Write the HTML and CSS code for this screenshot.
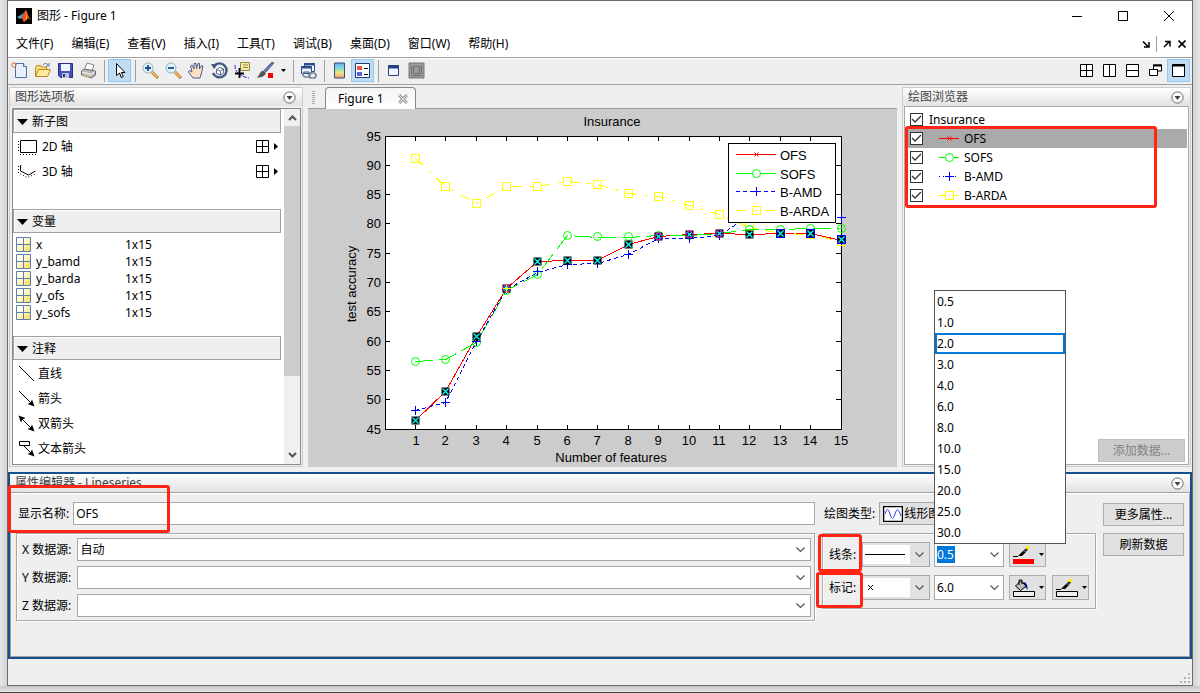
FILE: index.html
```html
<!DOCTYPE html>
<html lang="zh-CN">
<head>
<meta charset="utf-8">
<title>图形 - Figure 1</title>
<link rel="stylesheet" href="styles.css">
</head>
<body>
<svg class="defs" aria-hidden="true">
  <defs>
    <symbol id="grid4" viewBox="0 0 13 13"><path d="M0.5 0.5h12v12h-12zM6.5 0v13M0 6.5h13" fill="#fff" stroke="#000"/></symbol>
    <symbol id="menu-circle" viewBox="0 0 13 13"><circle cx="6.500" cy="6.500" r="5.600" fill="#fff" stroke="#666"/><path d="M3.500 5h6l-3 4z" fill="#444"/></symbol>
    <linearGradient id="cell" x1="0" y1="0" x2="1" y2="1"><stop offset="0.300" stop-color="#fffef0"/><stop offset="1" stop-color="#fbd94a"/></linearGradient>
    <symbol id="variable" viewBox="0 0 15 15"><path d="M.5.5h14v14H.5z" fill="url(#cell)" stroke="#5c80a8"/><path d="M7.500 0v15M0 7.500h15" stroke="#5c80a8"/></symbol>
    <symbol id="head" viewBox="0 0 9 9"><path d="M8.500 8.500L6 1.500 4.500 4.500 1.500 6z"/></symbol>
    <symbol id="m-x" viewBox="-6 -6 12 12"><path d="M-2-2L2 2M-2 2L2-2" stroke="currentColor"/></symbol>
    <symbol id="m-o" viewBox="-6 -6 12 12"><circle r="4" fill="none" stroke="currentColor"/></symbol>
    <symbol id="m-p" viewBox="-6 -6 12 12"><path d="M-4.500 0h9M0-4.500v9" stroke="currentColor"/></symbol>
    <symbol id="m-s" viewBox="-6 -6 12 12"><path d="M-4-4h8v8h-8z" fill="none" stroke="currentColor"/></symbol>
    <symbol id="m-sel" viewBox="-6 -6 12 12"><path d="M-4-4h8v8h-8z"/><path d="M-3-3L3 3M-3 3L3-3" stroke="#0ff" stroke-width="1.300"/></symbol>
    <symbol id="m-mix" viewBox="-6 -6 12 12"><path d="M-4-4h8v8h-8z"/><circle r="3.500" fill="none" stroke="#f0f"/><path d="M-2-2L2 2M-2 2L2-2" stroke="#0ff" stroke-width="1.300"/></symbol>
  </defs>
</svg>

<div class="window">
  <header class="titlebar">
    <svg class="logo" width="16" height="16" viewBox="0 0 16 16"><path d="M0 0h16v16H0z"/><path d="M1 9l4-2 3-3-2 6-2 1z" fill="#5aa0c0"/><path d="M5 10c2-1 3-7 5-8 1 0 2 7 5 10-2-1-3-2-4-1s-2 3-3 3-1-4-3-4z" fill="#e8561e"/><path d="M9.500 3c1 2 1 6 0 9l1.500-1c0-3-.5-6-1.500-8z" fill="#ffc24a"/></svg>
    <h1>图形 - Figure 1</h1>
    <div class="winbtns">
      <button aria-label="最小化"><svg width="12" height="12"><path d="M1 6.500h10" stroke="#000"/></svg></button>
      <button aria-label="最大化"><svg width="12" height="12"><path d="M1.500 1.500h9v9h-9z" fill="none" stroke="#000"/></svg></button>
      <button aria-label="关闭"><svg width="12" height="12"><path d="M1 1l10 10M11 1L1 11" stroke="#000"/></svg></button>
    </div>
  </header>

  <nav class="menubar">
    <a href="#">文件(F)</a><a href="#">编辑(E)</a><a href="#">查看(V)</a><a href="#">插入(I)</a><a href="#">工具(T)</a><a href="#">调试(B)</a><a href="#">桌面(D)</a><a href="#">窗口(W)</a><a href="#">帮助(H)</a>
    <div class="dockbtns">
      <button aria-label="停靠"><svg width="8" height="8"><path d="M1 1.500l5 5M7 2v5H2" fill="none" stroke="#000" stroke-width="1.500"/></svg></button>
      <i class="sep"></i>
      <button aria-label="取消停靠"><svg width="8" height="8"><path d="M1 7l5-5M2 1.500h5v5" fill="none" stroke="#000" stroke-width="1.500"/></svg></button>
      <button aria-label="关闭图形"><svg width="8" height="8"><path d="M.5.500l7 7M7.500.500l-7 7" stroke="#000" stroke-width="1.600"/></svg></button>
    </div>
  </nav>

  <div class="toolbar">
    <button aria-label="新建"><svg width="17" height="17"><path d="M4.500 1.500h8l3 3v11h-11z" fill="#e6f1fb" stroke="#4f6f9f"/><path d="M12.500 1.500v3h3" fill="#fff" stroke="#4f6f9f"/><path d="M3 0v6M0 3h6M1 1l4 4M5 1L1 5" stroke="#d8632a"/><circle cx="3" cy="3" r="1.200" fill="#fff"/></svg></button>
    <button aria-label="打开"><svg width="17" height="17"><path d="M1.500 14.500v-9l1-2h4l1 1.500h5v3" fill="#f8dc80" stroke="#b98a1f"/><path d="M1.500 14.500l3-7h12l-3 7z" fill="#fdea9c" stroke="#b98a1f"/><path d="M9 3c1-2 4-2 5 0M15 1v3h-3" fill="none" stroke="#4c76a8"/></svg></button>
    <button aria-label="保存"><svg width="17" height="17"><path d="M1.500 1.500h14v14h-12l-2-2z" fill="#4254b4" stroke="#26307c"/><path d="M4 2h9v7H4z" fill="#eef3ff"/><path d="M5 11h7v5H5z" fill="#b9c4df"/><path d="M6 12h2v3H6z" fill="#26307c"/></svg></button>
    <button aria-label="打印"><svg width="17" height="17"><path d="M4 8l3-7 7 2-2 6z" fill="#fff" stroke="#888"/><path d="M1.500 9l3-2 11 2v4l-4 3-10-3z" fill="#b9b9bb" stroke="#666"/><path d="M2 10l9 2.500 4-3" fill="none" stroke="#fff"/><path d="M3 13l7 2" stroke="#dcc14e"/></svg></button>
    <i class="sep"></i>
    <button class="on" aria-label="选择"><svg width="17" height="17"><path d="M5.500 1.500v12l3-2.500 1.800 4.500 2-.8-2-4.200h3.700z" fill="#fff" stroke="#000"/></svg></button>
    <i class="sep"></i>
    <button aria-label="放大"><svg width="17" height="17"><path d="M10 10l6 6" stroke="#9a6a20" stroke-width="3"/><path d="M10 10l5.500 5.500" stroke="#f3b356" stroke-width="1.800"/><circle cx="6" cy="6" r="5" fill="#dff2fa" stroke="#8fb2cc"/><path d="M3 6h6M6 3v6" stroke="#1c4b86" stroke-width="1.800"/></svg></button>
    <button aria-label="缩小"><svg width="17" height="17"><path d="M10 10l6 6" stroke="#9a6a20" stroke-width="3"/><path d="M10 10l5.500 5.500" stroke="#f3b356" stroke-width="1.800"/><circle cx="6" cy="6" r="5" fill="#dff2fa" stroke="#8fb2cc"/><path d="M3 6h6" stroke="#1c4b86" stroke-width="1.800"/></svg></button>
    <button aria-label="平移"><svg width="17" height="17"><path d="M5 16l-4.500-6 1-1.500L4 10 2.500 4 4 3l2 4V1.500h2l.5 5 1.500-5h1.500V7l2-3.500 1.500.500-1.500 7L12 16z" fill="#fbe0c6" stroke="#4d5a94"/></svg></button>
    <button aria-label="旋转"><svg width="17" height="17"><path d="M3 4a7 7 0 1 1-1 7" fill="none" stroke="#40597f" stroke-width="2.400"/><path d="M0 2h7L3 7z" fill="#40597f"/><path d="M5.500 7.500l3-2 4 1.500v4l-3 2-4-1.500zM5.500 7.500l4 1.500v4M9.500 9l3-2" fill="#fff" stroke="#56698a"/></svg></button>
    <button aria-label="数据游标"><svg width="17" height="17"><path d="M6.500.500h9v8h-9z" fill="#f5ecab" stroke="#968a3c"/><path d="M9 3h5M9 5.500h5" stroke="#968a3c"/><path d="M1 3c0 7 4 11 14 13" fill="none" stroke="#2a35e0" stroke-dasharray="4 1"/><path d="M5.500 6v10M1 11.500h9" stroke="#000" stroke-width="1.800"/></svg></button>
    <button aria-label="刷亮"><svg width="19" height="17"><path d="M16 0l2 1-8 9-2-1.500z" fill="#6678b4" stroke="#3c487a" stroke-width=".7"/><path d="M7 8.500l3 2.500c-2 4-5 5-9.500 4.500C4 14 3 10 7 8.500z" fill="#555"/><path d="M12 11h5v5h-5z" fill="#f00"/></svg></button>
    <button class="narrow" aria-label="刷亮选项"><svg width="5" height="3"><path d="M0 0h5L2.500 3z"/></svg></button>
    <i class="sep"></i>
    <button aria-label="链接"><svg width="17" height="17"><path d="M4.500 1.500h10v8h-10z" fill="#fff" stroke="#294b8d"/><path d="M4 2.500h11" stroke="#294b8d" stroke-width="2"/><path d="M1.500 4.500h10v7h-10z" fill="#e9f1fc" stroke="#294b8d"/><path d="M1 5.500h11" stroke="#294b8d" stroke-width="2"/><rect x="3" y="10" width="7" height="5" rx="2.500" fill="none" stroke="#71869c" stroke-width="1.700"/><rect x="9" y="11" width="7" height="5" rx="2.500" fill="none" stroke="#71869c" stroke-width="1.700"/></svg></button>
    <i class="sep"></i>
    <button aria-label="颜色栏"><svg width="17" height="17"><defs><linearGradient id="cb" x1="0" y1="0" x2="0" y2="1"><stop offset="0" stop-color="#6fa8f4"/><stop offset=".35" stop-color="#7ce0d4"/><stop offset=".65" stop-color="#f3e47e"/><stop offset="1" stop-color="#f09a7a"/></linearGradient></defs><path d="M3.500 1h10v15h-10z" fill="url(#cb)" stroke="#324d86"/></svg></button>
    <button class="on" aria-label="图例"><svg width="17" height="17"><path d="M1.500 1.500h14v14h-14z" fill="#fff" stroke="#1c3a78"/><path d="M3 4h5v4H3z" fill="#e8544a"/><path d="M3 10h5v4H3z" fill="#5a5fe0"/><path d="M10 6.500h4M10 12.500h4" stroke="#000"/></svg></button>
    <i class="sep"></i>
    <button aria-label="隐藏绘图工具"><svg width="17" height="17"><path d="M3.500 3.500h10v10h-10z" fill="#eef5ff" stroke="#23427f"/><path d="M3 5h11" stroke="#23427f" stroke-width="3"/></svg></button>
    <button aria-label="显示绘图工具"><svg width="17" height="17"><path d="M1 1h15v15H1z" fill="#999" stroke="#777"/><path d="M3.500 4v8M13.500 4v8M5.500 4.500h6v7h-6zM4 13.500h9" fill="none" stroke="#6f6f6f"/></svg></button>
    <div class="layouts">
      <button aria-label="平铺"><svg width="13" height="13"><use href="#grid4"/></svg></button>
      <button aria-label="左右平铺"><svg width="13" height="13"><path d="M.5.500h12v12H.5zM6.500 0v13" fill="#fff" stroke="#000"/></svg></button>
      <button aria-label="上下平铺"><svg width="13" height="13"><path d="M.5.500h12v12H.5zM0 6.500h13" fill="#fff" stroke="#000"/></svg></button>
      <button aria-label="浮动"><svg width="13" height="13"><path d="M4.500 1h8v6h-8z" fill="#fff" stroke="#000"/><path d="M4 1.500h9M0 6h9" stroke="#000" stroke-width="2"/><path d="M.5 5.500h8v6h-8z" fill="#fff" stroke="#000"/></svg></button>
      <button class="on" aria-label="最大化布局"><svg width="13" height="13"><path d="M.5.500h12v12H.5z" fill="#fff" stroke="#000"/><path d="M0 1.500h13" stroke="#000" stroke-width="2"/></svg></button>
    </div>
  </div>

  <main class="workspace">
    <section class="panel palette">
      <header class="panel-head"><h2>图形选项板</h2><button aria-label="面板菜单"><svg width="13" height="13"><use href="#menu-circle"/></svg></button></header>
      <div class="palette-box">
        <div class="palette-list">
          <h3 class="group"><svg width="11" height="6"><path d="M0 0h11L5.500 6z"/></svg>新子图</h3>
          <ul class="items axes">
            <li><svg width="20" height="16"><path d="M2.500 1.500h16v12h-16z" fill="none" stroke="#000"/><path d="M.5 2v12M2 15.500h17" stroke="#000" stroke-dasharray="1 2"/></svg><span>2D 轴</span><svg width="13" height="13"><use href="#grid4"/></svg><svg width="4" height="7"><path d="M0 0v7l4-3.500z"/></svg></li>
            <li><svg width="20" height="16"><path d="M2.500 1v6l8 4 7-4" fill="none" stroke="#000"/><path d="M.5 2v7l9 4.500 9-4" fill="none" stroke="#000" stroke-dasharray="1 2"/></svg><span>3D 轴</span><svg width="13" height="13"><use href="#grid4"/></svg><svg width="4" height="7"><path d="M0 0v7l4-3.500z"/></svg></li>
          </ul>
          <h3 class="group"><svg width="11" height="6"><path d="M0 0h11L5.500 6z"/></svg>变量</h3>
          <table class="vars">
            <tr><td><svg width="15" height="15"><use href="#variable"/></svg></td><td>x</td><td>1x15</td></tr>
            <tr><td><svg width="15" height="15"><use href="#variable"/></svg></td><td>y_bamd</td><td>1x15</td></tr>
            <tr><td><svg width="15" height="15"><use href="#variable"/></svg></td><td>y_barda</td><td>1x15</td></tr>
            <tr><td><svg width="15" height="15"><use href="#variable"/></svg></td><td>y_ofs</td><td>1x15</td></tr>
            <tr><td><svg width="15" height="15"><use href="#variable"/></svg></td><td>y_sofs</td><td>1x15</td></tr>
          </table>
          <h3 class="group"><svg width="11" height="6"><path d="M0 0h11L5.500 6z"/></svg>注释</h3>
          <ul class="items notes">
            <li><svg width="17" height="17"><path d="M1 1l15 15" stroke="#000"/></svg><span>直线</span></li>
            <li><svg width="17" height="17"><path d="M1 1l12 12" stroke="#000"/><use href="#head" x="8" y="8" width="9" height="9"/></svg><span>箭头</span></li>
            <li><svg width="17" height="17"><path d="M3 3l10 10" stroke="#000"/><use href="#head" x="8" y="8" width="9" height="9"/><use href="#head" x="8" y="8" width="9" height="9" transform="rotate(180 8.500 8.500)"/></svg><span>双箭头</span></li>
            <li><svg width="17" height="17"><path d="M1.500 1.500h10v4h-10z" fill="none" stroke="#000"/><path d="M6 6l8 8" stroke="#000"/><use href="#head" x="8" y="8" width="9" height="9"/></svg><span>文本箭头</span></li>
          </ul>
        </div>
        <div class="scrollbar">
          <svg width="9" height="6"><path d="M1 5l3.500-3.500L8 5" fill="none" stroke="#555" stroke-width="2"/></svg>
          <div class="thumb"></div>
          <svg width="9" height="6"><path d="M1 1l3.500 3.500L8 1" fill="none" stroke="#555" stroke-width="2"/></svg>
        </div>
      </div>
    </section>

    <section class="figure">
      <div class="tabs">
        <i class="grip"></i>
        <div class="tab"><a href="#">Figure 1</a><button aria-label="关闭标签"><svg width="10" height="10"><path d="M1 1l8 8M9 1L1 9" stroke="#999" stroke-width="3"/><path d="M1 1l8 8M9 1L1 9" stroke="#eee"/></svg></button></div>
      </div>
      <div class="canvas">
        <svg class="chart" viewBox="308 109 589 358" role="img" aria-label="Insurance">
          <path d="M385.500 136.500h456v293h-456z" fill="#fff" stroke="#000"/>
          <path stroke="#000" d="M415.500 136v5M445.500 136v5M476.500 136v5M506.500 136v5M537.500 136v5M567.500 136v5M597.500 136v5M628.500 136v5M658.500 136v5M689.500 136v5M719.500 136v5M749.500 136v5M780.500 136v5M810.500 136v5M415.500 425v5M445.500 425v5M476.500 425v5M506.500 425v5M537.500 425v5M567.500 425v5M597.500 425v5M628.500 425v5M658.500 425v5M689.500 425v5M719.500 425v5M749.500 425v5M780.500 425v5M810.500 425v5"/>
          <path stroke="#000" d="M385 165.500h5M385 194.500h5M385 223.500h5M385 253.500h5M385 282.500h5M385 311.500h5M385 341.500h5M385 370.500h5M385 399.500h5M836 165.500h5M836 194.500h5M836 223.500h5M836 253.500h5M836 282.500h5M836 311.500h5M836 341.500h5M836 370.500h5M836 399.500h5"/>
          <g class="lbl mid">
            <text x="612" y="126">Insurance</text><text x="611" y="462">Number of features</text>
            <text transform="translate(356 284) rotate(-90)">test accuracy</text>
            <text x="416" y="445">1</text><text x="445" y="445">2</text><text x="476" y="445">3</text><text x="506" y="445">4</text><text x="537" y="445">5</text><text x="567" y="445">6</text><text x="597" y="445">7</text><text x="628" y="445">8</text><text x="658" y="445">9</text><text x="689" y="445">10</text><text x="719" y="445">11</text><text x="749" y="445">12</text><text x="780" y="445">13</text><text x="810" y="445">14</text><text x="841" y="445">15</text>
          </g>
          <g class="lbl end">
            <text x="381" y="141">95</text><text x="381" y="170">90</text><text x="381" y="199">85</text><text x="381" y="228">80</text><text x="381" y="258">75</text><text x="381" y="287">70</text><text x="381" y="316">65</text><text x="381" y="346">60</text><text x="381" y="375">55</text><text x="381" y="404">50</text><text x="381" y="434">45</text>
          </g>
          <g class="series" transform="translate(.5 .5)">
            <polyline class="ofs" points="415,420 445,391 476,336 506,288 537,261 567,260 597,260 628,244 658,236 689,234 719,233 749,234 780,233 810,233 841,240"/>
            <polyline class="sofs" points="415,361 445,359 476,342 506,290 537,274 567,235 597,237 628,237 658,235 689,235 719,233 749,229 780,229 810,228 841,228"/>
            <polyline class="amd" points="415,410 445,402 476,341 506,289 537,272 567,264 597,263 628,254 658,238 689,238 719,235 749,215"/>
            <polyline class="arda" points="415,158 445,186 476,203 506,186 537,186 567,181 597,184 628,193 658,196 689,205 719,214 749,227 780,233 810,234 841,241"/>
          </g>
          <g class="c-y">
            <use href="#m-s" x="409.500" y="152.500" width="12" height="12"/><use href="#m-s" x="439.500" y="180.500" width="12" height="12"/><use href="#m-s" x="470.500" y="197.500" width="12" height="12"/><use href="#m-s" x="500.500" y="180.500" width="12" height="12"/><use href="#m-s" x="531.500" y="180.500" width="12" height="12"/><use href="#m-s" x="561.500" y="175.500" width="12" height="12"/><use href="#m-s" x="591.500" y="178.500" width="12" height="12"/><use href="#m-s" x="622.500" y="187.500" width="12" height="12"/><use href="#m-s" x="652.500" y="190.500" width="12" height="12"/><use href="#m-s" x="683.500" y="199.500" width="12" height="12"/><use href="#m-s" x="713.500" y="208.500" width="12" height="12"/><use href="#m-s" x="743.500" y="220.500" width="12" height="12"/><use href="#m-s" x="774.500" y="227.500" width="12" height="12"/><use href="#m-s" x="804.500" y="228.500" width="12" height="12"/><use href="#m-s" x="835.500" y="235.500" width="12" height="12"/>
          </g>
          <g class="c-g">
            <use href="#m-o" x="409.500" y="355.500" width="12" height="12"/><use href="#m-o" x="439.500" y="353.500" width="12" height="12"/><use href="#m-o" x="470.500" y="336.500" width="12" height="12"/><use href="#m-o" x="500.500" y="284.500" width="12" height="12"/><use href="#m-o" x="531.500" y="268.500" width="12" height="12"/><use href="#m-o" x="561.500" y="229.500" width="12" height="12"/><use href="#m-o" x="591.500" y="230.500" width="12" height="12"/><use href="#m-o" x="622.500" y="230.500" width="12" height="12"/><use href="#m-o" x="652.500" y="229.500" width="12" height="12"/><use href="#m-o" x="683.500" y="229.500" width="12" height="12"/><use href="#m-o" x="713.500" y="227.500" width="12" height="12"/><use href="#m-o" x="743.500" y="223.500" width="12" height="12"/><use href="#m-o" x="774.500" y="223.500" width="12" height="12"/><use href="#m-o" x="804.500" y="222.500" width="12" height="12"/><use href="#m-o" x="835.500" y="222.500" width="12" height="12"/>
          </g>
          <g class="c-b">
            <use href="#m-p" x="409.500" y="404.500" width="12" height="12"/><use href="#m-p" x="439.500" y="396.500" width="12" height="12"/><use href="#m-p" x="470.500" y="335.500" width="12" height="12"/><use href="#m-p" x="500.500" y="283.500" width="12" height="12"/><use href="#m-p" x="531.500" y="265.500" width="12" height="12"/><use href="#m-p" x="561.500" y="258.500" width="12" height="12"/><use href="#m-p" x="591.500" y="257.500" width="12" height="12"/><use href="#m-p" x="622.500" y="248.500" width="12" height="12"/><use href="#m-p" x="652.500" y="232.500" width="12" height="12"/><use href="#m-p" x="683.500" y="232.500" width="12" height="12"/><use href="#m-p" x="713.500" y="229.500" width="12" height="12"/><use href="#m-p" x="835.500" y="211.500" width="12" height="12"/>
          </g>
          <use href="#m-sel" x="409.500" y="414.500" width="12" height="12"/><use href="#m-sel" x="439.500" y="385.500" width="12" height="12"/><use href="#m-sel" x="470.500" y="330.500" width="12" height="12"/><use href="#m-mix" x="500.500" y="282.500" width="12" height="12"/><use href="#m-sel" x="531.500" y="255.500" width="12" height="12"/><use href="#m-sel" x="561.500" y="254.500" width="12" height="12"/><use href="#m-sel" x="591.500" y="254.500" width="12" height="12"/><use href="#m-sel" x="622.500" y="238.500" width="12" height="12"/><use href="#m-mix" x="652.500" y="230.500" width="12" height="12"/><use href="#m-mix" x="683.500" y="228.500" width="12" height="12"/><use href="#m-mix" x="713.500" y="227.500" width="12" height="12"/><use href="#m-sel" x="743.500" y="228.500" width="12" height="12"/><use href="#m-sel" x="774.500" y="227.500" width="12" height="12"/><use href="#m-sel" x="804.500" y="227.500" width="12" height="12"/><use href="#m-sel" x="835.500" y="233.500" width="12" height="12"/>
          <path d="M502.500 288.500h8M506.500 284.500v8" stroke="#ff0"/>
          <path d="M776.500 229.500h8v8h-8zM806.500 229.500h8v8h-8zM837.500 235.500h8v8h-8z" fill="none" stroke="#00f"/>
          <path d="M728.500 143.500h107v79h-107z" fill="#fff" stroke="#000"/>
          <g class="series"><path class="ofs" d="M736 154.500h40"/><path class="sofs" d="M736 173.500h40"/><path class="amd" d="M736 191.500h40"/><path class="arda" d="M736 210.500h40"/></g>
          <use class="c-r" href="#m-x" x="750.500" y="148.500" width="12" height="12"/><g class="c-g"><circle cx="756.500" cy="173.500" r="4" fill="#fff" stroke="currentColor"/></g><use class="c-b" href="#m-p" x="750.500" y="185.500" width="12" height="12"/><use class="c-y" href="#m-s" x="750.500" y="204.500" width="12" height="12"/>
          <g class="lbl"><text x="780" y="160">OFS</text><text x="780" y="179">SOFS</text><text x="780" y="197">B-AMD</text><text x="780" y="216">B-ARDA</text></g>
        </svg>
      </div>
    </section>

    <section class="panel browser">
      <header class="panel-head"><h2>绘图浏览器</h2><button aria-label="面板菜单"><svg width="13" height="13"><use href="#menu-circle"/></svg></button></header>
      <div class="browser-box">
        <div class="tree">
          <label><input type="checkbox" checked>Insurance</label>
          <label class="leaf selected"><input type="checkbox" checked><svg width="20" height="12"><path d="M0 5.500h20" stroke="red"/><use class="c-r" href="#m-x" x="4.500" y="-.5" width="12" height="12"/></svg>OFS</label>
          <label class="leaf"><input type="checkbox" checked><svg width="20" height="12"><path d="M0 5.500h6M15 5.500h5" stroke="#0f0"/><use class="c-g" href="#m-o" x="4.500" y="-.5" width="12" height="12"/></svg>SOFS</label>
          <label class="leaf"><input type="checkbox" checked><svg width="20" height="12"><path d="M0 5.500h20" stroke="#00f" stroke-dasharray="1 3"/><path d="M6 5.500h9M10.500 1v9" stroke="#00f"/></svg>B-AMD</label>
          <label class="leaf"><input type="checkbox" checked><svg width="20" height="12"><path d="M0 5.500h6M15 5.500h5M10 5.500h1" stroke="#ff0"/><use class="c-y" href="#m-s" x="4.500" y="-.5" width="12" height="12"/></svg>B-ARDA</label>
          <i class="callout callout-series"></i>
        </div>
        <button class="btn add" disabled>添加数据...</button>
      </div>
    </section>
  </main>

  <section class="editor">
    <header class="panel-head"><h2>属性编辑器 - Lineseries</h2><button aria-label="面板菜单"><svg width="13" height="13"><use href="#menu-circle"/></svg></button></header>
    <div class="editor-body">
      <div class="sources">
        <div class="name-row"><label for="dname">显示名称:</label><input id="dname" type="text" value="OFS"><i class="callout callout-name"></i></div>
        <div class="box source-grid">
          <label for="sx">X 数据源:</label><select id="sx"><option>自动</option></select>
          <label for="sy">Y 数据源:</label><select id="sy"><option></option></select>
          <label for="sz">Z 数据源:</label><select id="sz"><option></option></select>
        </div>
      </div>
      <div class="styling">
        <div class="type-row"><label for="ptype">绘图类型:</label><div class="picture-select type"><select id="ptype"><option>线形图</option></select><svg width="20" height="16"><path d="M.5.500h19v15H.5z" fill="#fff" stroke="#000" stroke-width="1.500"/><path d="M2 8c2-6 3-6 5 0s3 6 5 0 3-6 6 2" fill="none" stroke="#33f"/></svg></div></div>
        <div class="box style-box">
          <div class="style-row">
            <label for="lstyle">线条:<i class="callout callout-line"></i></label>
            <div class="picture-select"><select id="lstyle" class="gray"><option></option></select><svg width="47" height="19"><path d="M0 0h47v19H0z" fill="#fff"/><path d="M2 9.500h40" stroke="#000"/></svg></div>
            <div class="combo"><input class="marked" type="text" value="0.5" aria-label="线宽"><button aria-label="展开线宽"></button>
              <ul class="options" role="listbox"><li>0.5</li><li>1.0</li><li class="current">2.0</li><li>3.0</li><li>4.0</li><li>6.0</li><li>8.0</li><li>10.0</li><li>15.0</li><li>20.0</li><li>25.0</li><li>30.0</li></ul>
            </div>
            <button class="swatch" aria-label="线条颜色"><svg width="22" height="18"><path d="M0 10.500h5" stroke="#000"/><path d="M5 10l5-5 3 1-4 4z"/><path d="M10 5l4-4 2 1-3 4z" fill="#333"/><path d="M13 0h3v3h-3z" fill="#fe0"/><path d="M0 13h21v5H0z" fill="red"/></svg><svg width="5" height="3"><path d="M0 0h5L2.500 3z"/></svg></button>
          </div>
          <div class="style-row">
            <label for="mstyle">标记:<i class="callout callout-marker"></i></label>
            <div class="picture-select"><select id="mstyle" class="gray"><option></option></select><svg width="47" height="19"><path d="M0 0h47v19H0z" fill="#fff"/><path d="M5 7l5 5M10 7l-5 5" stroke="#000"/></svg></div>
            <div class="combo"><input type="text" value="6.0" aria-label="标记大小"><button aria-label="展开标记大小"></button></div>
            <button class="swatch" aria-label="标记填充颜色"><svg width="22" height="18"><path d="M2.500 7l5-5 6 5-6 4.500z" fill="#bbb" stroke="#000"/><path d="M6 6V1h3v4" fill="none" stroke="#000"/><path d="M10 3c3 0 5 3 4.500 8L12 7z" fill="#00117a"/><path d="M.5 12.500h21v5H.5z" fill="#eee" stroke="#000"/></svg><svg width="5" height="3"><path d="M0 0h5L2.500 3z"/></svg></button>
            <button class="swatch" aria-label="标记边颜色"><svg width="22" height="18"><path d="M0 10.500h5" stroke="#000"/><path d="M5 10l5-5 3 1-4 4z"/><path d="M10 5l4-4 2 1-3 4z" fill="#333"/><path d="M13 0h3v3h-3z" fill="#fe0"/><path d="M.5 12.500h21v5H.5z" fill="#eee" stroke="#000"/></svg><svg width="5" height="3"><path d="M0 0h5L2.500 3z"/></svg></button>
          </div>
        </div>
      </div>
      <div class="actions"><button class="btn">更多属性...</button><button class="btn">刷新数据</button></div>
    </div>
  </section>
  <footer class="status"><svg width="11" height="11"><path d="M8 0h2v2H8zM4 4h2v2H4zM8 4h2v2H8zM0 8h2v2H0zM4 8h2v2H4zM8 8h2v2H8z" fill="#b8b5a4"/></svg></footer>
</div>
<div class="taskedge"></div>
</body>
</html>
```
FILE: styles.css
```css
* { box-sizing: border-box; }
body {
  margin: 0;
  min-height: 100vh;
  padding: 0 7px;
  display: flex;
  flex-direction: column;
  background: linear-gradient(90deg, #e6e7e9, #d2d3d5 7px, #d2d3d5 calc(100% - 7px), #e8e8e8);
  font: 12px/16px "Noto Sans", "Noto Sans CJK SC", sans-serif;
  color: #000;
}
h1, h2, h3, ul { margin: 0; padding: 0; font: inherit; list-style: none; }
button, input, select { font: inherit; color: inherit; margin: 0; }
button { padding: 0; border: 0; background: none; display: grid; place-items: center; }
a { color: inherit; text-decoration: none; }
svg { display: block; flex: none; }
.defs { position: absolute; width: 0; height: 0; }

.window { flex: 1; display: flex; flex-direction: column; border: 1px solid #6c6c6c; background: #efefef; }
.taskedge { height: 7px; margin: 0 -7px; border-bottom: 1px solid #444; background: linear-gradient(#c4c5c7, #e4e4e4); }

.titlebar { display: flex; align-items: center; height: 29px; padding-left: 8px; background: #fff; }
.titlebar h1 { margin-left: 5px; }
.winbtns { display: flex; margin-left: auto; }
.winbtns button { width: 46px; height: 28px; }

.menubar { display: flex; align-items: center; gap: 18px; height: 28px; padding: 0 5px 0 8px; background: #fff; border-bottom: 1px solid #a0a0a0; }
.dockbtns { display: flex; align-items: center; gap: 5px; margin-left: auto; }
.dockbtns button { width: 10px; height: 16px; }
.sep { width: 8px; height: 22px; display: flex; justify-content: center; }
.sep::before { content: ""; width: 1px; background: #a0a0a0; }
.dockbtns .sep { width: 1px; height: 16px; }

.toolbar { display: flex; align-items: center; height: 27px; padding: 0 2px 2px 0; border-top: 1px solid #fff; border-bottom: 1px solid #a0a0a0; }
.toolbar button { width: 23px; height: 23px; }
.toolbar .narrow { width: 12px; }
.toolbar .on { background: #c0dcf3; border: 1px solid #90c8f6; }
.layouts { display: flex; margin-left: auto; }

.workspace { flex: 1; display: flex; padding: 2px 1px 5px; }
.panel { display: flex; flex-direction: column; border: 1px solid #ccc; }
.panel-head { display: flex; align-items: center; justify-content: space-between; height: 18px; padding: 0 6px 0 5px; background: linear-gradient(#fff, #e2e2e2); color: #444; }
.palette { width: 294px; }
.browser { width: 289px; }

.palette-box { flex: 1; display: flex; margin: 2px 1px 1px 2px; border: 1px solid #888b92; background: #fff; }
.palette-list { flex: 1; min-width: 0; }
.group { display: flex; align-items: center; gap: 4px; height: 24px; margin-right: 3px; padding: 1px 0 0 3px; border: 1px solid #a0a0a0; background: #efefef; box-shadow: inset 1px 1px #fff; }
.items li { display: flex; align-items: center; height: 25px; padding-left: 5px; gap: 4px; }
.items span { margin-right: auto; }
.axes { padding: 1px 6px 25px 0; }
.axes li > :last-child { margin-left: 1px; }
.notes li { gap: 3px; }
.notes { padding-top: 1px; }
.vars { border-collapse: collapse; margin: 3px 0 15px 3px; }
.vars td { padding: 0; height: 17px; line-height: 17px; }
.vars td:nth-child(1) { width: 20px; }
.vars td:nth-child(2) { width: 89px; }
.scrollbar { width: 16px; display: flex; flex-direction: column; align-items: center; padding: 6px 0; gap: 5px; background: #f0f0f0; }
.thumb { width: 100%; height: 250px; background: #cdcdcd; }
.scrollbar > :last-child { margin-top: auto; }

.figure { flex: 1; min-width: 0; display: flex; flex-direction: column; margin: 0 5px; }
.tabs { display: flex; align-items: stretch; gap: 10px; height: 22px; padding-left: 4px; border-bottom: 1px solid #999; }
.grip { width: 3px; margin: 4px 0 3px; background: repeating-linear-gradient(#aaa 0 1px, #efefef 1px 2px); }
.tab { display: flex; align-items: center; justify-content: space-between; width: 91px; margin-bottom: -1px; padding: 0 7px 0 12px; border: 1px solid #888; border-bottom: 0; border-radius: 4px 4px 0 0; background: linear-gradient(#f4f4f4, #fff); }
.canvas { flex: 1; background: #ccc; }
.chart { width: 100%; height: auto; }
.chart path, .chart polyline { shape-rendering: crispEdges; }
.lbl { font: 13px "Liberation Sans", Arial, sans-serif; }
.mid { text-anchor: middle; }
.end { text-anchor: end; }
.series { fill: none; }
.ofs { stroke: #f00; }
.sofs { stroke: #0f0; stroke-dasharray: 18 6; }
.amd { stroke: #00f; stroke-dasharray: 4 3; }
.arda { stroke: #ff0; stroke-dasharray: 10 8 3 8; }
.c-r { color: #f00; }
.c-g { color: #0f0; }
.c-b { color: #00f; }
.c-y { color: #ff0; }

.browser-box { flex: 1; display: flex; flex-direction: column; justify-content: space-between; margin: 0 1px 1px; border: 1px solid #a8a8a8; background: #fff; }
.tree { position: relative; padding: 3px 1px 0 0; }
.tree label { display: flex; align-items: center; height: 19px; padding-left: 5px; gap: 6px; }
.tree .leaf { gap: 5px; }
.tree .leaf svg { margin-left: 11px; }
.tree .selected { background: #aaa; }
.tree input {
  appearance: none;
  width: 13px;
  height: 13px;
  border: 1px solid #333;
  background: #fff url("data:image/svg+xml,%3Csvg xmlns='http://www.w3.org/2000/svg' width='11' height='11'%3E%3Cpath d='M1 5l3 3 6-6' fill='none' stroke='%23333' stroke-width='1.3'/%3E%3C/svg%3E");
}
.btn { height: 23px; border: 1px solid #adadad; background: #e1e1e1; }
.add { align-self: flex-end; width: 87px; margin: 0 3px 2px; background: #ccc; border-color: #bfbfbf; color: #838383; }

.callout { position: absolute; z-index: 2; border: 3px solid #ff2414; border-radius: 3px; pointer-events: none; }
.callout-series { left: 0; top: 19px; width: 252px; height: 82px; }
.callout-name { left: -8px; top: -17px; width: 162px; height: 48px; }
.callout-line { left: -11px; top: -13px; width: 44px; height: 38px; }
.callout-marker { left: -13px; top: -8px; width: 47px; height: 36px; }

.editor { border: 2px solid #14508c; }
.editor .panel-head { border-bottom: 1px solid #a0a0a0; padding-right: 6px; height: 19px; }
.editor-body { display: flex; gap: 7px; min-height: 164px; padding: 8px 5px 0; border: 1px solid #a0a0a0; border-top: 1px solid #fff; }
.sources { flex: 1; min-width: 0; }
.name-row { position: relative; display: flex; align-items: center; gap: 4px; padding-left: 2px; }
.name-row input { flex: 1; }
input[type="text"], select { min-width: 0; height: 23px; border: 1px solid #a5a7ac; background: #fff; border-radius: 0; padding: 0 2px; outline: 0; }
select {
  appearance: none;
  background: #fff url("data:image/svg+xml,%3Csvg xmlns='http://www.w3.org/2000/svg' width='9' height='6'%3E%3Cpath d='M.5.500l4 4 4-4' fill='none' stroke='%23555' stroke-width='1.200'/%3E%3C/svg%3E") no-repeat right 5px center;
}
.box { margin-top: 8px; border: 1px solid #a8a8a8; box-shadow: inset 1px 1px #fff, 1px 1px #fff; }
.source-grid { display: grid; grid-template-columns: auto 1fr; align-items: center; gap: 5px 6px; padding: 4px 3px 3px 5px; }
.styling { width: 274px; }
.type-row, .style-row { display: flex; align-items: center; gap: 4px; }
.type-row { padding-left: 2px; }
.picture-select { display: grid; align-items: center; }
.picture-select > * { grid-area: 1 / 1; }
.picture-select svg { margin-left: 1px; pointer-events: none; }
.picture-select select { width: 68px; height: 25px; background-color: #e1e1e1; }
.picture-select.type svg { margin-left: 4px; }
.picture-select.type select { width: 120px; height: 23px; padding-left: 24px; }
.style-box { display: flex; flex-direction: column; gap: 8px; padding: 8px 6px; }
.style-row label { position: relative; flex: none; width: 29px; }
.combo { position: relative; flex: none; display: flex; align-items: center; justify-content: space-between; width: 70px; height: 25px; margin-right: 1px; padding-left: 2px; border: 1px solid #a5a7ac; background: #fff; }
.combo input[type="text"] { width: 30px; height: 17px; padding: 0; border: 0; }
.combo .marked[type="text"] { width: 18px; background: #0078d7; color: #fff; }
.combo button { width: 9px; height: 6px; margin-right: 4px; background: url("data:image/svg+xml,%3Csvg xmlns='http://www.w3.org/2000/svg' width='9' height='6'%3E%3Cpath d='M.5.500l4 4 4-4' fill='none' stroke='%23555' stroke-width='1.200'/%3E%3C/svg%3E"); }
.options { position: absolute; z-index: 3; left: -1px; bottom: 22px; width: 132px; border: 1px solid #555; background: #fff; }
.options li { height: 21px; padding-left: 2px; line-height: 21px; }
.options .current { padding-left: 0; border: 2px solid #0078d7; line-height: 17px; }
.swatch { flex: none; display: flex; align-items: center; gap: 4px; width: 37px; height: 25px; padding-left: 3px; border: 1px solid #adadad; background: #e1e1e1; margin-right: 2px; }
.actions { display: flex; flex-direction: column; gap: 7px; width: 81px; padding-top: 1px; }
.status { display: flex; justify-content: flex-end; align-items: flex-end; height: 26px; padding: 0 1px 1px; }
```
